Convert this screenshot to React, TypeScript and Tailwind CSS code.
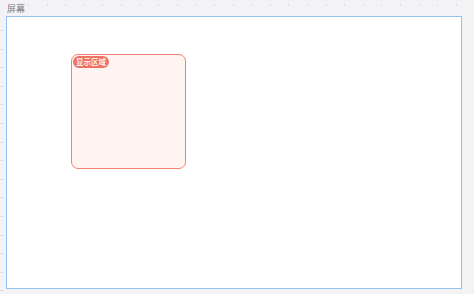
import React from "react";

export default function App() {
  const topTicks = Array.from({ length: 24 }, (_, i) => 28 + i * 18.6);
  const leftTicks = Array.from({ length: 15 }, (_, i) => 30 + i * 18.6);
  return (
    <div
      className="relative w-[474px] h-[294px] bg-[#f3f3f6] overflow-hidden"
      style={{ fontFamily: '"Noto Sans CJK SC", "Noto Sans", sans-serif' }}
    >
      {topTicks.map((x, i) => (
        <div
          key={"t" + i}
          className="absolute top-[4px] w-px h-[2px] bg-[#dcdce2]"
          style={{ left: x }}
        />
      ))}
      {leftTicks.map((y, i) => (
        <div
          key={"l" + i}
          className="absolute left-0 h-px w-[3px] bg-[#dcdce2]"
          style={{ top: y }}
        />
      ))}
      <div className="flex flex-col pl-[6px] pt-[2px]">
        <div className="h-[14px] text-[9px] leading-[14px] text-[#7a7a80] pl-[1px]">屏幕</div>
        <div className="relative w-[456px] h-[273px] border-[1.5px] border-[#94c2f0] bg-white">
          <div className="absolute left-[64px] top-[37px] w-[115px] h-[115px] rounded-[7px] border-[1.5px] border-[#ef8272] bg-[#fff4f2]">
            <div className="absolute left-[1px] top-[1px] h-[12px] px-[3px] rounded-[6px] bg-[#ef7262] text-white text-[7.5px] leading-[12px] font-medium">
              显示区域
            </div>
          </div>
        </div>
      </div>
    </div>
  );
}
